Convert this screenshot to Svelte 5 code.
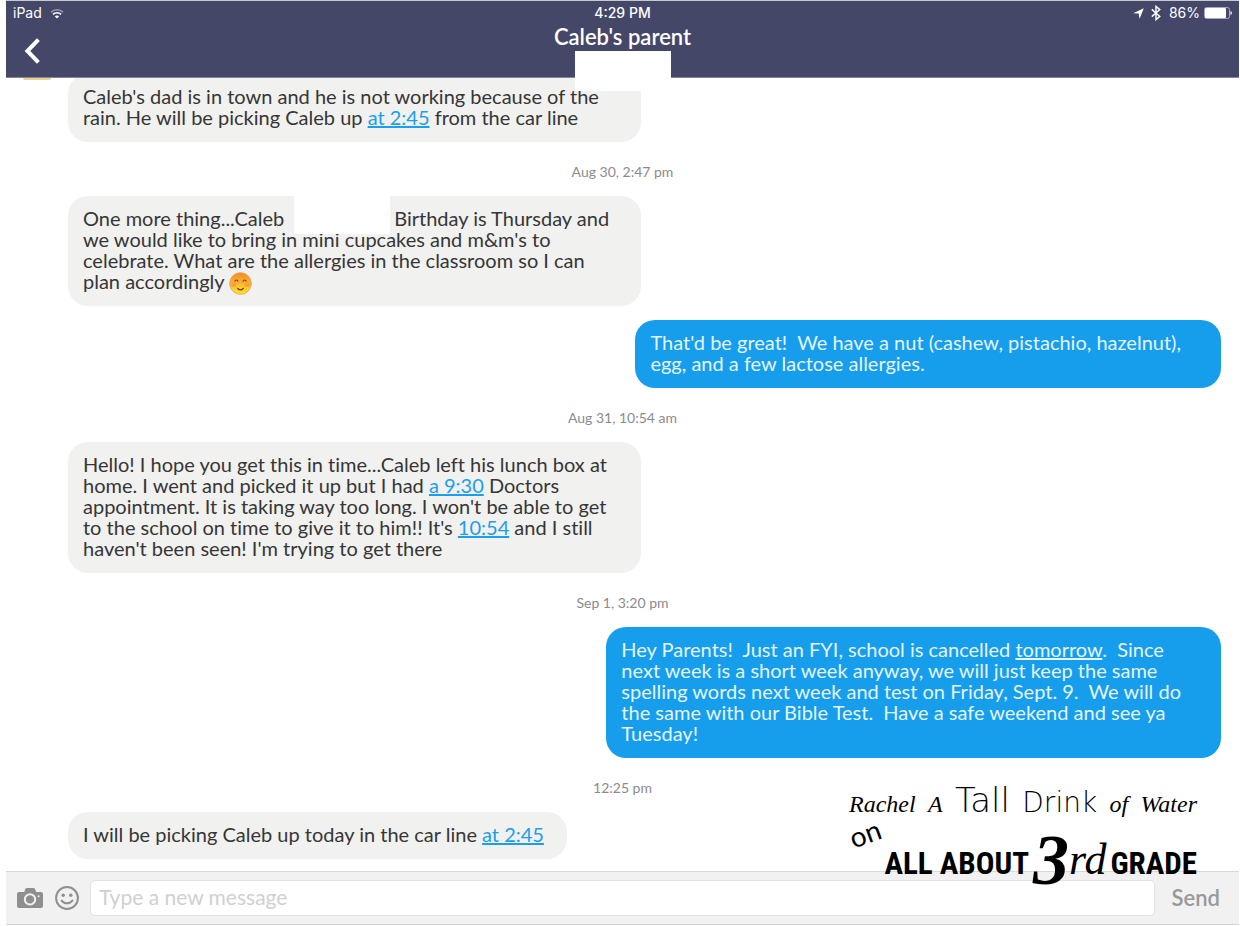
<script lang="ts">
  type Part = string | { link: string } | { redacted: true } | { emoji: true };

  interface Message {
    from: 'parent' | 'teacher';
    stamp?: string;
    avatar?: boolean;
    parts: Part[];
  }

  const contact = "Caleb's parent";

  const messages: Message[] = [
    {
      from: 'parent',
      avatar: true,
      parts: [
        "Caleb's dad is in town and he is not working because of the rain. He will be picking Caleb up ",
        { link: 'at 2:45' },
        ' from the car line'
      ]
    },
    {
      from: 'parent',
      stamp: 'Aug 30, 2:47 pm',
      parts: [
        'One more thing...Caleb',
        { redacted: true },
        "Birthday is Thursday and we would like to bring in mini cupcakes and m&m's to celebrate. What are the allergies in the classroom so I can plan accordingly ",
        { emoji: true }
      ]
    },
    {
      from: 'teacher',
      parts: [
        "That'd be great!  We have a nut (cashew, pistachio, hazelnut),\negg, and a few lactose allergies."
      ]
    },
    {
      from: 'parent',
      stamp: 'Aug 31, 10:54 am',
      parts: [
        'Hello! I hope you get this in time...Caleb left his lunch box at home. I went and picked it up but I had ',
        { link: 'a 9:30' },
        " Doctors appointment. It is taking way too long. I won't be able to get to the school on time to give it to him!! It's ",
        { link: '10:54' },
        " and I still haven't been seen! I'm trying to get there"
      ]
    },
    {
      from: 'teacher',
      stamp: 'Sep 1, 3:20 pm',
      parts: [
        'Hey Parents!  Just an FYI, school is cancelled ',
        { link: 'tomorrow' },
        '.  Since\nnext week is a short week anyway, we will just keep the same\nspelling words next week and test on Friday, Sept. 9.  We will do\nthe same with our Bible Test.  Have a safe weekend and see ya\nTuesday!'
      ]
    },
    {
      from: 'parent',
      stamp: '12:25 pm',
      parts: ['I will be picking Caleb up today in the car line ', { link: 'at 2:45' }]
    }
  ];

  let draft = $state('');
</script>

<div class="app">
  <header>
    <div class="status">
      <div class="carrier">
        <span>iPad</span>
        <svg width="14" height="11" viewBox="0 0 14 11" fill="none" stroke="#fff" stroke-width="1.6">
          <path d="M1 4.2C4.3.9 9.7.9 13 4.2" opacity=".45" />
          <path d="M3 6.4c2.2-2.2 5.8-2.2 8 0" />
          <path d="M7 10.6 4.8 8.3c1.2-1.2 3.2-1.2 4.4 0z" fill="#fff" stroke="none" />
        </svg>
      </div>
      <div class="clock">4:29 PM</div>
      <div class="battery">
        <svg width="11" height="11" viewBox="0 0 11 11"><path d="M10.8.2 6.6 10.8 5.6 5.6.2 5.2z" fill="#fff" /></svg>
        <svg class="bluetooth" width="10" height="16" viewBox="0 0 10 16" fill="none" stroke="#fff" stroke-width="1.4">
          <path d="M.8 4.4 8.8 11.4 5 14.6V1.4l3.8 3.2-8 7" />
        </svg>
        <span>86%</span>
        <svg width="28" height="12" viewBox="0 0 28 12">
          <rect x=".5" y=".5" width="25" height="11" rx="2" fill="none" stroke="#a9aabf" />
          <rect x="1" y="1" width="21" height="10" rx="1" fill="#fff" />
          <path d="M26.5 4c1.8.4 1.8 3.6 0 4z" fill="#fff" />
        </svg>
      </div>
    </div>
    <div class="title">
      <button class="back" aria-label="Back">
        <svg width="16" height="26" viewBox="0 0 16 26" fill="none" stroke="#fff" stroke-width="4">
          <path d="M14.4 1.6 3.4 13l11 11.4" />
        </svg>
      </button>
      <h1>{contact}</h1>
    </div>
    <div class="name-cover"></div>
  </header>

  <main>
    {#each messages as message}
      {#if message.stamp}
        <time>{message.stamp}</time>
      {/if}
      <div class="bubble {message.from}">{#if message.avatar}<span class="avatar"></span>{/if}{#each message.parts as part}{#if typeof part === 'string'}{part}{:else if 'link' in part}<a href="#event">{part.link}</a>{:else if 'redacted' in part}<span class="redacted"></span>{:else}<svg class="emoji" width="23" height="23" viewBox="0 0 22 22" fill="none" stroke-linecap="round">
            <defs>
              <linearGradient id="face" x1="0" y1="0" x2="0" y2="1">
                <stop offset="0" stop-color="#f58a25" />
                <stop offset=".5" stop-color="#fdb62f" />
                <stop offset="1" stop-color="#ffe52e" />
              </linearGradient>
            </defs>
            <circle cx="11" cy="11" r="10.4" fill="url(#face)" stroke="#d9a763" stroke-width=".8" />
            <ellipse cx="4.6" cy="12.4" rx="2.6" ry="2" fill="#ff8a4a" opacity=".6" />
            <ellipse cx="17.4" cy="12.4" rx="2.6" ry="2" fill="#ff8a4a" opacity=".6" />
            <path d="M5.6 8.8c.6-1.5 2.4-1.5 3 0M13.4 8.8c.6-1.5 2.4-1.5 3 0" stroke="#7a3b10" stroke-width="1" />
            <path d="M8.4 15.8c1.5 1.7 3.7 1.7 5.2 0" stroke="#7a3b10" stroke-width="1.2" />
          </svg>{/if}{/each}</div>
    {/each}
  </main>

  <form class="composer" onsubmit={(e) => e.preventDefault()}>
    <button type="button" aria-label="Add photo">
      <svg width="26" height="20" viewBox="0 0 26 20">
        <path d="M2 4h5.200l1-2.600C8.600.5 9.200 0 10 0h6.400c.8 0 1.400.5 1.800 1.400l1 2.600H24c1.200 0 2 .8 2 2v12c0 1.200-.8 2-2 2H2c-1.200 0-2-.8-2-2V6c0-1.200.8-2 2-2z" fill="#8f8f8f" />
        <circle cx="13" cy="11.4" r="5.200" fill="#8f8f8f" stroke="#f1f1f1" stroke-width="2" />
        <circle cx="21.6" cy="8.2" r="1" fill="#f1f1f1" />
      </svg>
    </button>
    <button type="button" aria-label="Add emoji">
      <svg width="24" height="24" viewBox="0 0 24 24" fill="none" stroke="#8f8f8f" stroke-width="2">
        <circle cx="12" cy="12" r="10.9" />
        <circle cx="8.2" cy="9.2" r="1.7" fill="#8f8f8f" stroke="none" />
        <circle cx="15.8" cy="9.2" r="1.7" fill="#8f8f8f" stroke="none" />
        <path d="M6.6 14.6c2.6 3.6 8.2 3.6 10.8 0" stroke-linecap="round" />
      </svg>
    </button>
    <input type="text" placeholder="Type a new message" aria-label="Message" bind:value={draft} />
    <button type="submit" class="send">Send</button>
  </form>

  <div class="credit">
    <div class="author">
      <span class="script">Rachel</span>
      <span class="script">A</span>
      <span class="thin">Tall</span>
      <span class="thin small">Drink</span>
      <span class="script">of</span>
      <span class="script">Water</span>
    </div>
    <div class="blog">
      <span class="on">on</span>
      <span class="block">ALL ABOUT</span>
      <span class="third"><span class="digit">3</span>rd</span>
      <span class="block">GRADE</span>
    </div>
  </div>
</div>

<style>
  :global(body) {
    margin: 0;
    background: #fff;
  }

  .app {
    position: relative;
    display: flex;
    flex-direction: column;
    box-sizing: border-box;
    height: 100vh;
    padding: 0 1px 1px 6px;
    overflow: hidden;
    font-family: Lato, 'Open Sans', sans-serif;
    font-variant-ligatures: none;
    color: #363636;
  }

  button {
    display: flex;
    padding: 0;
    border: 0;
    background: none;
    font: inherit;
    cursor: pointer;
  }

  header {
    position: relative;
    z-index: 1;
    flex: none;
    box-sizing: border-box;
    height: 78px;
    border-top: 1px solid #c5cacf;
    border-bottom: 1px solid #85859a;
    background: #454769;
    color: #fff;
  }

  .status {
    display: grid;
    grid-template-columns: 1fr auto 1fr;
    align-items: center;
    height: 24px;
    padding: 0 7px;
    font: 14px/24px Inter, Roboto, sans-serif;
  }

  .carrier,
  .battery {
    display: flex;
    align-items: center;
    gap: 8px;
  }

  .battery {
    justify-content: flex-end;
    gap: 4px;
  }

  .bluetooth {
    margin: 0 4px 0 3px;
  }

  .clock {
    font-weight: 500;
  }

  .title {
    display: grid;
    grid-template-columns: 1fr auto 1fr;
  }

  .title h1 {
    margin: 0;
    font-size: 22px;
    line-height: 24px;
    font-weight: 600;
  }

  .back {
    justify-self: start;
    margin: 13px 0 0 18px;
  }

  .name-cover {
    position: absolute;
    top: 50px;
    left: 50%;
    width: 96px;
    height: 40px;
    margin-left: -48px;
    background: #fff;
  }

  main {
    flex: 1;
    display: flex;
    flex-direction: column;
    justify-content: flex-end;
    min-height: 0;
    padding: 0 18px 12px 62px;
    overflow: hidden;
  }

  time {
    flex: none;
    align-self: center;
    height: 54px;
    margin-right: 44px;
    font-size: 14px;
    line-height: 60px;
    color: #8b8b8b;
  }

  .bubble {
    position: relative;
    flex: none;
    box-sizing: border-box;
    border-radius: 20px;
    font-size: 20px;
    line-height: 21px;
    white-space: pre-wrap;
  }

  .parent {
    align-self: flex-start;
    max-width: 573px;
    padding: 12px 23px 14px 15px;
    background: #f1f1f0;
  }

  .teacher {
    align-self: flex-end;
    max-width: 640px;
    padding: 12px 40px 14px 15px;
    background: #169dec;
    color: #e4f5ff;
  }

  .parent + .teacher {
    margin-top: 14px;
  }

  a {
    color: #1b9fec;
    text-decoration: underline;
  }

  .teacher a {
    color: inherit;
  }

  .avatar {
    position: absolute;
    top: -22px;
    left: -45px;
    width: 28px;
    height: 28px;
    border-radius: 2px;
    background: #ecd08c;
  }

  .redacted {
    position: relative;
    display: inline-block;
    width: 110px;
    height: 1px;
  }

  .redacted::after {
    content: '';
    position: absolute;
    left: 10px;
    bottom: -8px;
    width: 96px;
    height: 40px;
    background: #fff;
  }

  .emoji {
    margin: -4px 0;
    vertical-align: middle;
  }

  .composer {
    flex: none;
    display: flex;
    align-items: center;
    gap: 12px;
    box-sizing: border-box;
    height: 54px;
    padding: 0 19px 0 11px;
    border-top: 1px solid #d8d8d8;
    border-bottom: 1px solid #d2d2d2;
    background: #f1f1f1;
  }

  .composer input {
    flex: 1;
    box-sizing: border-box;
    min-width: 0;
    height: 36px;
    margin-left: -1px;
    padding: 0 8px 4px;
    border: 1px solid #e2e2e2;
    border-radius: 5px;
    background: #fff;
    font: 21px Lato, 'Open Sans', sans-serif;
    color: #363636;
  }

  .composer input::placeholder {
    color: #d0d0d0;
    opacity: 1;
  }

  .composer .send {
    margin: 0 0 2px 5px;
    font-weight: 600;
    font-size: 22px;
    color: #999;
  }

  .credit {
    position: absolute;
    right: 43px;
    bottom: 30px;
    z-index: 2;
    width: 348px;
    color: #000;
    pointer-events: none;
  }

  .author,
  .blog {
    display: flex;
    align-items: baseline;
    justify-content: space-between;
  }

  .author {
    height: 44px;
    line-height: 44px;
  }

  .blog {
    height: 62px;
    padding-top: 12px;
    line-height: 60px;
  }

  .script {
    font-family: 'Liberation Serif', serif;
    font-style: italic;
    font-size: 24px;
  }

  .thin {
    font-family: 'DejaVu Sans Light', 'DejaVu Sans ExtraLight', 'DejaVu Sans', sans-serif;
    font-weight: 200;
    font-size: 34px;
  }

  .small {
    font-size: 28px;
  }

  .on {
    align-self: flex-start;
    margin-top: -16px;
    font-size: 28px;
    line-height: 30px;
    transform: rotate(-20deg);
  }

  .block {
    font-family: 'Liberation Sans Narrow', 'Roboto Condensed', 'Open Sans Condensed', sans-serif;
    font-weight: 700;
    font-size: 31px;
  }

  .third {
    font-family: 'Liberation Serif', serif;
    font-style: italic;
    font-size: 44px;
    line-height: 44px;
  }

  .digit {
    font-size: 72px;
    font-weight: 700;
    vertical-align: -10px;
  }
</style>
